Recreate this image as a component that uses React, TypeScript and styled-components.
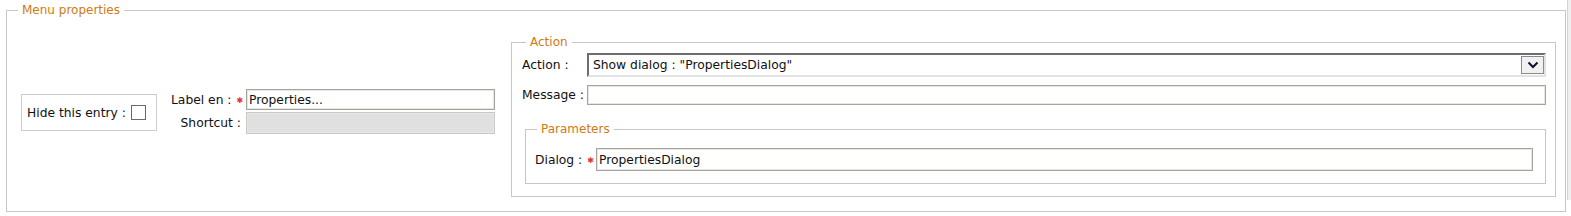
import React from "react";
import styled, { createGlobalStyle } from "styled-components";

const Global = createGlobalStyle`
  html, body { margin: 0; padding: 0; background: #fff; }
  body { font-family: "DejaVu Sans", "Verdana", sans-serif; font-size: 12.3px; color: #111; }
`;

const Page = styled.div`
  display: flex;
  width: 1571px;
  height: 216px;
  box-sizing: border-box;
  padding-left: 6px;
`;

const Group = styled.fieldset<{ $pad: string }>`
  margin: 0;
  padding: ${(p) => p.$pad};
  border: 1px solid #c6c6c6;
  min-width: 0;
  box-sizing: border-box;
`;

const Legend = styled.legend<{ $indent: number }>`
  padding: 0 4px;
  margin-left: ${(p) => p.$indent}px;
  color: #cf7a12;
  font-size: 12px;
  line-height: 14px;
`;

const Outer = styled(Group)`
  flex: 0 0 1560px;
  width: 1560px;
  height: 209px;
  margin-top: 3px;
  display: flex;
`;

const SideStrip = styled.div`
  flex: 0 0 3px;
  width: 3px;
  height: 200px;
  margin-left: 1px;
  border-left: 1px solid #d4d4d4;
  background: #efefef;
`;

const Row = styled.div`
  flex: 1;
  display: flex;
  align-items: flex-start;
`;

const HideBox = styled.div`
  margin-top: 77px;
  flex: 0 0 136px;
  height: 37px;
  box-sizing: border-box;
  border: 1px solid #cdcdcd;
  display: flex;
  align-items: center;
  padding-left: 5px;
  gap: 5px;
  white-space: nowrap;
`;

const Check = styled.span`
  width: 15px;
  height: 15px;
  box-sizing: border-box;
  border: 1px solid #6a6a6a;
  background: #fff;
  display: inline-block;
`;

const LabelGrid = styled.div`
  margin-top: 72px;
  margin-left: 14px;
  flex: 0 0 auto;
  display: grid;
  grid-template-columns: 70px 249px;
  column-gap: 5px;
  row-gap: 2px;
  align-items: center;
`;

const Label = styled.span<{ $align?: string }>`
  text-align: ${(p) => p.$align || "right"};
  white-space: nowrap;
`;

const Req = styled.span`
  color: #e8322c;
  font-size: 8px;
  margin-left: 5px;
  vertical-align: 1px;
`;

const TextBox = styled.div<{ $h: number; $disabled?: boolean }>`
  height: ${(p) => p.$h}px;
  box-sizing: border-box;
  border: 1px solid #a7a49d;
  box-shadow: inset 0 0 0 1px #e7e6e2;
  background: ${(p) => (p.$disabled ? "#e0e0e0" : "#fff")};
  border-color: ${(p) => (p.$disabled ? "#c9c8c2" : "#a7a49d")};
  display: flex;
  align-items: center;
  padding-left: 2px;
  white-space: nowrap;
`;

const ActionGroup = styled(Group)`
  flex: 1;
  margin-left: 16px;
  margin-top: 18px;
  height: 162px;
`;

const FormGrid = styled.div<{ $cols: string }>`
  display: grid;
  grid-template-columns: ${(p) => p.$cols};
  row-gap: 8px;
  align-items: center;
`;

const Select = styled.div`
  height: 24px;
  box-sizing: border-box;
  border-style: solid;
  border-width: 2px;
  border-color: #6d6d6d #e2e2e2 #e2e2e2 #6d6d6d;
  display: flex;
  align-items: center;
  padding-left: 4px;
  padding-right: 0;
  background: #fff;
  white-space: nowrap;
`;

const SelectText = styled.span`
  flex: 1;
`;

const DropButton = styled.span`
  width: 23px;
  height: 18px;
  box-sizing: border-box;
  border: 1px solid #8a8a8a;
  background: #f1f1f1;
  display: flex;
  align-items: center;
  justify-content: center;
`;

const ParamGroup = styled(Group)`
  margin: 17px 0 0 3px;
  height: 62px;
`;

export default function App() {
  return (
    <>
      <Global />
      <Page>
        <Outer $pad="0 9px 14px 14px">
          <Legend $indent={-3}>Menu properties</Legend>
          <Row>
            <HideBox>
              <span>Hide this entry :</span>
              <Check />
            </HideBox>
            <LabelGrid>
              <Label>
                Label en :<Req>✱</Req>
              </Label>
              <TextBox $h={21}>Properties...</TextBox>
              <Label>Shortcut :</Label>
              <TextBox $h={22} $disabled />
            </LabelGrid>
            <ActionGroup $pad="4px 9px 12px 10px">
              <Legend $indent={4}>Action</Legend>
              <FormGrid $cols="65px 1fr">
                <Label $align="left">Action :</Label>
                <Select>
                  <SelectText>Show dialog : "PropertiesDialog"</SelectText>
                  <DropButton>
                    <svg width="12" height="8" viewBox="0 0 12 8">
                      <path d="M1.5 1.5 L6 6 L10.5 1.5" fill="none" stroke="#0a1430" strokeWidth="2" />
                    </svg>
                  </DropButton>
                </Select>
                <Label $align="left">Message :</Label>
                <TextBox $h={20} />
              </FormGrid>
              <ParamGroup $pad="12px 12px 11px 9px">
                <Legend $indent={2}>Parameters</Legend>
                <FormGrid $cols="61px 1fr">
                  <Label $align="left">
                    Dialog :<Req>✱</Req>
                  </Label>
                  <TextBox $h={23}>PropertiesDialog</TextBox>
                </FormGrid>
              </ParamGroup>
            </ActionGroup>
          </Row>
        </Outer>
        <SideStrip />
      </Page>
    </>
  );
}
